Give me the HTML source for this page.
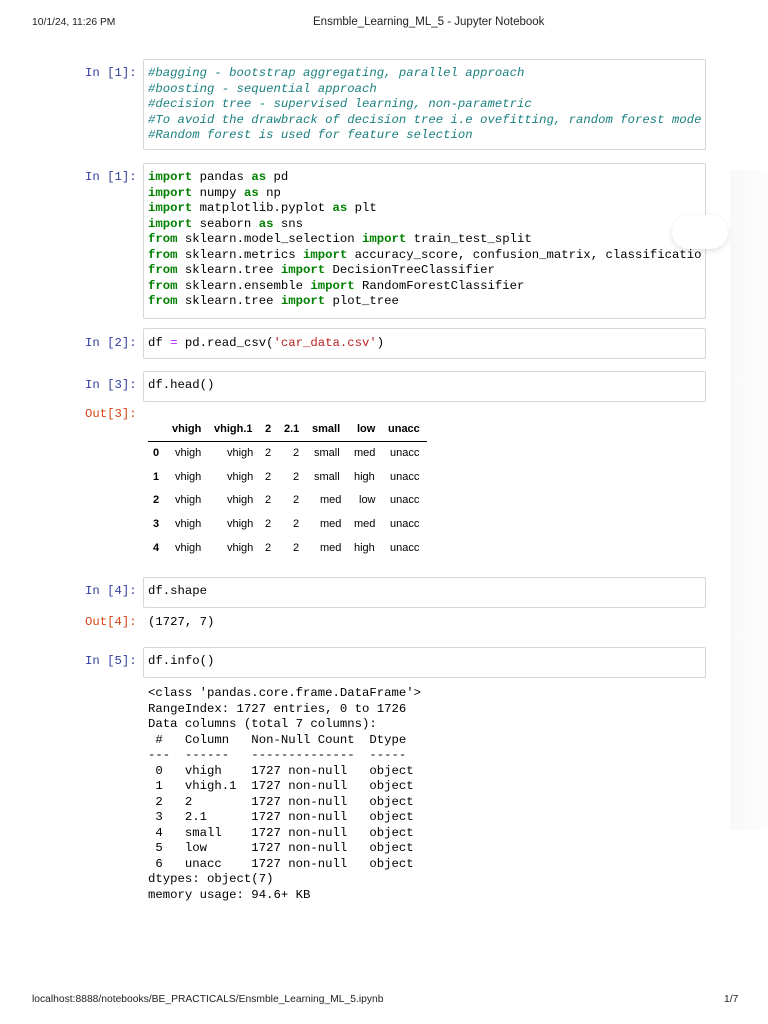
<!DOCTYPE html>
<html><head><meta charset="utf-8"><style>
body{margin:0;width:768px;height:1024px;background:#fff;position:relative;overflow:hidden;font-family:"Liberation Sans",sans-serif}
.a{position:absolute;white-space:pre}
.hd{font-size:10.3px;color:#222}
.box{position:absolute;left:143px;width:561px;border:1px solid #d6d6d6;border-radius:2px;background:#fff}
.code{position:absolute;left:148px;font-family:"Liberation Mono",monospace;font-size:12.3px;line-height:15.5px;white-space:pre;color:#000}
.pin{position:absolute;left:85px;font-family:"Liberation Mono",monospace;font-size:12.3px;color:#303f9f;white-space:pre}
.pout{position:absolute;left:85px;font-family:"Liberation Mono",monospace;font-size:12.3px;color:#d84315;white-space:pre}
.k{color:#008000;font-weight:bold}
.c{color:#1a7f80;font-style:italic}
.s{color:#ba2121}
.o{color:#aa22ff}
.t{position:absolute;font-size:11px;color:#000}
.tb{font-weight:bold}
</style></head><body>
<div class="a hd" style="left:32px;top:17px">10/1/24, 11:26 PM</div>
<div class="a hd" style="left:313px;top:16px;font-size:11.5px">Ensmble_Learning_ML_5 - Jupyter Notebook</div>
<div class="a hd" style="left:32px;top:994px">localhost:8888/notebooks/BE_PRACTICALS/Ensmble_Learning_ML_5.ipynb</div>
<div class="a hd" style="left:724px;top:994px">1/7</div>

<div style="position:absolute;left:730px;top:170px;width:38px;height:660px;background:linear-gradient(to right,#f8f8f8,#fdfdfd)"></div>

<div class="box" style="top:59px;height:89px"></div>
<div class="pin" style="top:66px">In [1]:</div>
<div class="code c" style="top:66px;width:557px;overflow:hidden">#bagging - bootstrap aggregating, parallel approach
#boosting - sequential approach
#decision tree - supervised learning, non-parametric
#To avoid the drawbrack of decision tree i.e ovefitting, random forest mode
#Random forest is used for feature selection</div>

<div class="box" style="top:163px;height:154px"></div>
<div class="pin" style="top:170px">In [1]:</div>
<div class="code" style="top:170px;width:557px;overflow:hidden"><span class="k">import</span> pandas <span class="k">as</span> pd
<span class="k">import</span> numpy <span class="k">as</span> np
<span class="k">import</span> matplotlib.pyplot <span class="k">as</span> plt
<span class="k">import</span> seaborn <span class="k">as</span> sns
<span class="k">from</span> sklearn.model_selection <span class="k">import</span> train_test_split
<span class="k">from</span> sklearn.metrics <span class="k">import</span> accuracy_score, confusion_matrix, classificatio
<span class="k">from</span> sklearn.tree <span class="k">import</span> DecisionTreeClassifier
<span class="k">from</span> sklearn.ensemble <span class="k">import</span> RandomForestClassifier
<span class="k">from</span> sklearn.tree <span class="k">import</span> plot_tree</div>
<div style="position:absolute;left:672px;top:215px;width:56px;height:34px;border-radius:17px;background:#fff;box-shadow:0 2px 6px rgba(0,0,0,.12)"></div>

<div class="box" style="top:328px;height:29px"></div>
<div class="pin" style="top:336px">In [2]:</div>
<div class="code" style="top:336px">df <span class="o">=</span> pd.read_csv(<span class="s">'car_data.csv'</span>)</div>

<div class="box" style="top:371px;height:29px"></div>
<div class="pin" style="top:378px">In [3]:</div>
<div class="code" style="top:378px">df.head()</div>
<div class="pout" style="top:407px">Out[3]:</div>

<div style="position:absolute;left:148px;top:441px;width:279px;height:1px;background:#000"></div>
<div class="t tb" style="left:172px;top:423px">vhigh</div>
<div class="t tb" style="left:214px;top:423px">vhigh.1</div>
<div class="t tb" style="left:265px;top:423px">2</div>
<div class="t tb" style="left:284px;top:423px">2.1</div>
<div class="t tb" style="left:312px;top:423px">small</div>
<div class="t tb" style="left:357px;top:423px">low</div>
<div class="t tb" style="left:388px;top:423px">unacc</div>

<div class="t tb" style="left:153px;top:447px">0</div><div class="t" style="left:175px;top:447px">vhigh</div><div class="t" style="left:227px;top:447px">vhigh</div><div class="t" style="left:265px;top:447px">2</div><div class="t" style="left:293px;top:447px">2</div><div class="t" style="left:314px;top:447px">small</div><div class="t" style="left:354px;top:447px">med</div><div class="t" style="left:390px;top:447px">unacc</div>
<div class="t tb" style="left:153px;top:471px">1</div><div class="t" style="left:175px;top:471px">vhigh</div><div class="t" style="left:227px;top:471px">vhigh</div><div class="t" style="left:265px;top:471px">2</div><div class="t" style="left:293px;top:471px">2</div><div class="t" style="left:314px;top:471px">small</div><div class="t" style="left:354px;top:471px">high</div><div class="t" style="left:390px;top:471px">unacc</div>
<div class="t tb" style="left:153px;top:494px">2</div><div class="t" style="left:175px;top:494px">vhigh</div><div class="t" style="left:227px;top:494px">vhigh</div><div class="t" style="left:265px;top:494px">2</div><div class="t" style="left:293px;top:494px">2</div><div class="t" style="left:320px;top:494px">med</div><div class="t" style="left:359px;top:494px">low</div><div class="t" style="left:390px;top:494px">unacc</div>
<div class="t tb" style="left:153px;top:518px">3</div><div class="t" style="left:175px;top:518px">vhigh</div><div class="t" style="left:227px;top:518px">vhigh</div><div class="t" style="left:265px;top:518px">2</div><div class="t" style="left:293px;top:518px">2</div><div class="t" style="left:320px;top:518px">med</div><div class="t" style="left:354px;top:518px">med</div><div class="t" style="left:390px;top:518px">unacc</div>
<div class="t tb" style="left:153px;top:542px">4</div><div class="t" style="left:175px;top:542px">vhigh</div><div class="t" style="left:227px;top:542px">vhigh</div><div class="t" style="left:265px;top:542px">2</div><div class="t" style="left:293px;top:542px">2</div><div class="t" style="left:320px;top:542px">med</div><div class="t" style="left:354px;top:542px">high</div><div class="t" style="left:390px;top:542px">unacc</div>

<div class="box" style="top:577px;height:29px"></div>
<div class="pin" style="top:584px">In [4]:</div>
<div class="code" style="top:584px">df.shape</div>
<div class="pout" style="top:615px">Out[4]:</div>
<div class="code" style="top:615px">(1727, 7)</div>

<div class="box" style="top:647px;height:29px"></div>
<div class="pin" style="top:654px">In [5]:</div>
<div class="code" style="top:654px">df.info()</div>
<div class="code" style="top:686px">&lt;class 'pandas.core.frame.DataFrame'&gt;
RangeIndex: 1727 entries, 0 to 1726
Data columns (total 7 columns):
 #   Column   Non-Null Count  Dtype 
---  ------   --------------  ----- 
 0   vhigh    1727 non-null   object
 1   vhigh.1  1727 non-null   object
 2   2        1727 non-null   object
 3   2.1      1727 non-null   object
 4   small    1727 non-null   object
 5   low      1727 non-null   object
 6   unacc    1727 non-null   object
dtypes: object(7)
memory usage: 94.6+ KB</div>
</body></html>
